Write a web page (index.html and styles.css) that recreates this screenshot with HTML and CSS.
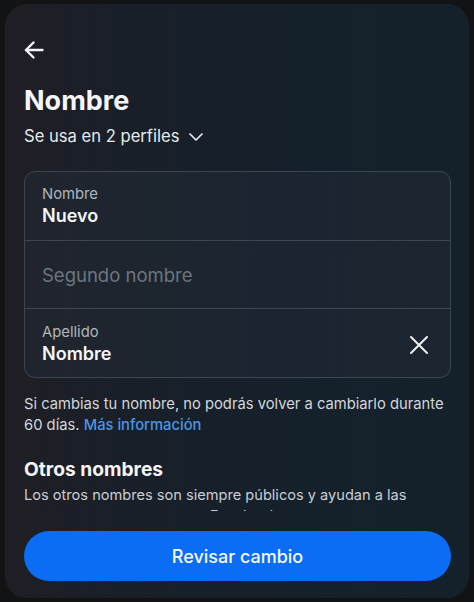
FILE: index.html
```html
<!DOCTYPE html>
<html lang="es">
<head>
<meta charset="utf-8">
<title>Nombre</title>
<link rel="stylesheet" href="styles.css">
</head>
<body>
<div class="panel">
  <header class="top">
    <button class="back" aria-label="Atrás">
      <svg width="20" height="18" viewBox="0 0 20 18" fill="none" stroke="#f2f4f6" stroke-width="2.4" stroke-linecap="round" stroke-linejoin="round"><path d="M18.5 9H2"/><path d="M9.5 1.5L2 9l7.5 7.5"/></svg>
    </button>
    <h1 class="title">Nombre</h1>
    <div class="profiles">
      <span>Se usa en 2 perfiles</span>
      <svg class="chev" width="14" height="8" viewBox="0 0 14 8" fill="none" stroke="#e6e9ec" stroke-width="1.7" stroke-linecap="round" stroke-linejoin="round"><path d="M1 1l6 6 6-6"/></svg>
    </div>
  </header>
  <main class="scroll">
    <div class="card">
      <div class="row first">
        <span class="label">Nombre</span>
        <span class="value">Nuevo</span>
      </div>
      <div class="row">
        <span class="placeholder">Segundo nombre</span>
      </div>
      <div class="row with-icon">
        <div class="texts">
          <span class="label">Apellido</span>
          <span class="value">Nombre</span>
        </div>
        <svg class="clear" width="20" height="20" viewBox="0 0 20 20" fill="none" stroke="#eef0f2" stroke-width="2" stroke-linecap="round"><path d="M2 2l16 16M18 2L2 18"/></svg>
      </div>
    </div>
    <p class="info">Si cambias tu nombre, no podrás volver a cambiarlo durante 60 días. <a class="link">Más información</a></p>
    <h2 class="subhead">Otros nombres</h2>
    <p class="desc">Los otros nombres son siempre públicos y ayudan a las personas a encontrarte en Facebook.</p>
  </main>
  <footer class="bottom">
    <button class="primary">Revisar cambio</button>
  </footer>
</div>
</body>
</html>
```

FILE: styles.css
```css
* { box-sizing: border-box; }
html, body {
  margin: 0;
  padding: 0;
  background: #121315;
  width: 474px;
  height: 602px;
  overflow: hidden;
  font-family: Inter, "Noto Sans", "Liberation Sans", sans-serif;
}
.panel {
  margin: 4px 5px 0 5px;
  height: 594px;
  border-radius: 22px;
  background: linear-gradient(90deg, #201e24 0%, #1a1f28 20%, #15202b 55%, #14212b 100%);
  display: flex;
  flex-direction: column;
  padding: 0 18px 0 19px;
  overflow: hidden;
}
.top {
  padding-top: 37px;
}
.back {
  background: none;
  border: 0;
  padding: 0;
  margin: 0;
  display: block;
  height: 18px;
}
.title {
  margin: 27px 0 0 0;
  font-size: 27px;
  line-height: 30px;
  font-weight: 700;
  color: #f4f5f7;
}
.profiles {
  margin-top: 9px;
  display: flex;
  align-items: center;
  gap: 10px;
  font-size: 16.6px;
  line-height: 22px;
  color: #e6e9ec;
}
.chev { margin-top: 1px; }
.scroll {
  flex: 1;
  overflow: hidden;
  padding-top: 24px;
  min-height: 0;
}
.card {
  border: 1px solid #3b4651;
  border-radius: 11px;
  background: rgba(40, 50, 60, 0.35);
}
.row {
  height: 68px;
  padding: 0 17px;
  display: flex;
  flex-direction: column;
  justify-content: center;
}
.row + .row { border-top: 1px solid #3b4651; }
.row.with-icon {
  height: 69px;
  flex-direction: row;
  align-items: center;
  justify-content: space-between;
  padding-right: 21px;
  padding-top: 2px;
}
.texts { display: flex; flex-direction: column; }
.label {
  font-size: 14.8px;
  line-height: 19px;
  color: #aeb6be;
}
.value {
  font-size: 18px;
  line-height: 24px;
  font-weight: 600;
  color: #f3f5f7;
}
.placeholder {
  font-size: 18.5px;
  line-height: 22px;
  color: #6c7680;
  margin-top: 1px;
}
.clear { margin-top: 2px; }
.info {
  margin: 16px 0 0 0;
  font-size: 14.75px;
  line-height: 21px;
  color: #d3d7db;
}
.link { color: #4d95e6; font-weight: 500; }
.subhead {
  margin: 21px 0 0 0;
  font-size: 19.2px;
  line-height: 24px;
  font-weight: 700;
  color: #f4f5f7;
}
.desc {
  margin: 4px 0 0 0;
  font-size: 14.6px;
  line-height: 21px;
  color: #c9ced3;
}
.bottom {
  padding: 20px 0 17px 0;
}
.primary {
  display: block;
  width: 100%;
  height: 50px;
  border: 0;
  border-radius: 25px;
  background: #0b6cf4;
  color: #f5f8ff;
  font-family: inherit;
  font-size: 18px;
  font-weight: 500;
}
```
